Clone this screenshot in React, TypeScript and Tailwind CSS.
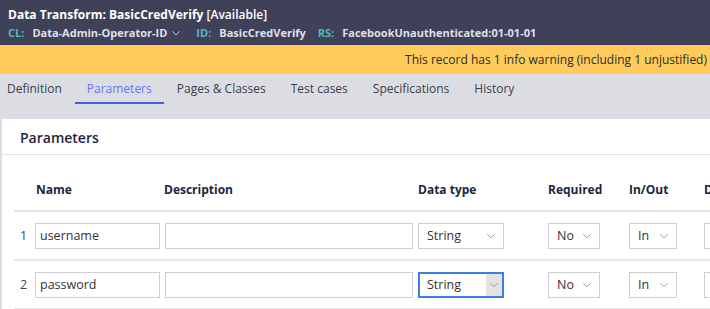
import React from 'react';

const font = { fontFamily: '"Open Sans", "Noto Sans", sans-serif' };

function Chevron({ className = '' }: { className?: string }) {
    return (
        <svg viewBox="0 0 12 8" className={className} fill="none" stroke="currentColor" strokeWidth="1.1">
            <path d="M1 1.5 L6 6.5 L11 1.5" />
        </svg>
    );
}

function SelectBox({ value, width, focused = false }: { value: string; width: string; focused?: boolean }) {
    return (
        <div
            className={`flex h-[26px] shrink-0 items-center justify-between bg-white ${width} ${focused ? 'border-2 border-[#3f7de4]' : 'border border-[#cfcfcf]'}`}
        >
            <span className={`text-[12.5px] text-[#333] ${focused ? 'pl-[7px]' : 'pl-[8px]'}`}>{value}</span>
            <span className={`flex h-full w-[16px] items-center justify-center ${focused ? 'bg-[#e3e3e3]' : 'mr-[4px]'}`}>
                <Chevron className="h-[6px] w-[10px] text-[#8a8a8a]" />
            </span>
        </div>
    );
}

function TextBox({ value, width }: { value: string; width: string }) {
    return (
        <div className={`flex h-[26px] shrink-0 items-center border border-[#cfcfcf] bg-white pl-[4px] text-[12.5px] text-[#333] ${width}`}>
            {value}
        </div>
    );
}

const rows = [
    { n: '1', name: 'username' },
    { n: '2', name: 'password' },
];

const tabs = ['Definition', 'Parameters', 'Pages & Classes', 'Test cases', 'Specifications', 'History'];

export default function App() {
    return (
        <div className="h-[309px] w-[710px] overflow-hidden bg-[#dcdde2]" style={font}>
            {/* Header */}
            <div className="h-[45px] bg-[#3e4157] px-[8px] pt-[6px]">
                <div className="text-[12px] font-bold leading-[17px] text-white">
                    Data Transform: BasicCredVerify <span className="font-semibold">[Available]</span>
                </div>
                <div className="flex items-center whitespace-nowrap text-[11px] font-bold leading-[19px]">
                    <span className="text-[#4fb8c4]">CL:</span>
                    <span className="ml-[8px] text-[#dfe0e8]">Data-Admin-Operator-ID</span>
                    <Chevron className="ml-[4px] h-[6px] w-[10px] text-[#dfe0e8]" />
                    <span className="ml-[15px] text-[#4fb8c4]">ID:</span>
                    <span className="ml-[8px] text-[#dfe0e8]">BasicCredVerify</span>
                    <span className="ml-[12px] text-[#4fb8c4]">RS:</span>
                    <span className="ml-[8px] text-[#dfe0e8]">FacebookUnauthenticated:01-01-01</span>
                </div>
            </div>

            {/* Warning */}
            <div className="flex h-[29px] items-center justify-end whitespace-nowrap bg-[#fecb5c] pr-[3px] pt-[1px] text-[12px] text-[#2b2b2b]">
                This record has 1 info warning (including 1 unjustified)
            </div>

            {/* Tabs */}
            <div className="h-[45px]">
                <div className="-ml-[5px] flex whitespace-nowrap pt-[5px]">
                    {tabs.map((t) => (
                        <div
                            key={t}
                            className={`mr-[1px] px-[12px] pb-[3px] text-[12px] leading-[20px] ${t === 'Parameters' ? 'border-b-2 border-[#3c5ef2] text-[#6477f4]' : 'border-b-2 border-transparent text-[#3a3d4a]'}`}
                        >
                            {t}
                        </div>
                    ))}
                </div>
            </div>

            {/* Panel */}
            <div className="ml-[2px] h-full bg-white">
                <div className="flex h-[36px] items-center border-b border-[#e4e4e4] pl-[18px] pt-[2px] text-[14px] font-semibold text-[#1e2440]">
                    Parameters
                </div>

                <div className="pl-[12px]">
                    {/* header row */}
                    <div className="flex items-end whitespace-nowrap border-b-2 border-[#e2e2e2] pb-[11px] pt-[26px] text-[12px] font-bold leading-[18px] text-[#1e2440]">
                        <div className="w-[22px] shrink-0" />
                        <div className="w-[128px] shrink-0">Name</div>
                        <div className="w-[254px] shrink-0">Description</div>
                        <div className="w-[130px] shrink-0">Data type</div>
                        <div className="w-[81px] shrink-0">Required</div>
                        <div className="w-[75px] shrink-0">In/Out</div>
                        <div className="shrink-0">Default</div>
                    </div>

                    {rows.map((r, i) => (
                        <div key={r.n} className="flex items-center whitespace-nowrap border-b-2 border-[#e6e6e6] pb-[10px] pt-[11px]">
                            <div className="w-[21px] shrink-0 pl-[6px] text-[12.5px] text-[#444]">{r.n}</div>
                            <div className="w-[130px] shrink-0">
                                <TextBox value={r.name} width="w-[125px]" />
                            </div>
                            <div className="w-[253px] shrink-0">
                                <TextBox value="" width="w-[248px]" />
                            </div>
                            <div className="w-[130px] shrink-0">
                                <SelectBox value="String" width="w-[86px]" focused={i === 1} />
                            </div>
                            <div className="w-[81px] shrink-0">
                                <SelectBox value="No" width="w-[52px]" />
                            </div>
                            <div className="w-[75px] shrink-0">
                                <SelectBox value="In" width="w-[48px]" />
                            </div>
                            <div className="shrink-0">
                                <TextBox value="" width="w-[80px]" />
                            </div>
                        </div>
                    ))}
                </div>
            </div>
        </div>
    );
}
